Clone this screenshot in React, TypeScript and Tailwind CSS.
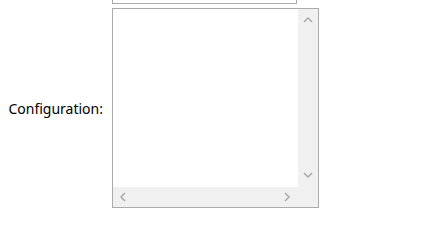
const Chevron = ({ dir }: { dir: "up" | "down" | "left" | "right" }) => {
  const paths: Record<string, string> = {
    up: "M1 6 L5 2 L9 6",
    down: "M1 2 L5 6 L9 2",
    left: "M6 1 L2 5 L6 9",
    right: "M2 1 L6 5 L2 9",
  };
  const vertical = dir === "up" || dir === "down";
  return (
    <svg
      width={vertical ? 10 : 8}
      height={vertical ? 8 : 10}
      viewBox={vertical ? "0 0 10 8" : "0 0 8 10"}
      fill="none"
      stroke="#a6a6a6"
      strokeWidth="1.4"
    >
      <path d={paths[dir]} />
    </svg>
  );
};

const App = () => {
  return (
    <div
      className="w-[421px] h-[239px] bg-white overflow-hidden text-[14px] text-black"
      style={{ fontFamily: '"Segoe UI", "Noto Sans", "Open Sans", sans-serif' }}
    >
      <div className="grid grid-cols-[112px_auto] gap-y-[4px]">
        {/* 上の入力欄 (見切れ) */}
        <div />
        <div className="-mt-[20px] w-[185px] h-[24px] border border-[#ababab] bg-white" />

        {/* 設定テキストエリア */}
        <div className="flex items-center justify-end pr-[9px]">Configuration:</div>
        <div className="w-[207px] h-[200px] border border-[#ababab] flex flex-col bg-white">
          <div className="flex flex-1">
            <div className="flex-1 bg-white" />
            <div className="w-[20px] bg-[#f0f0f0] flex flex-col items-center justify-between pt-[7px] pb-[8px]">
              <Chevron dir="up" />
              <Chevron dir="down" />
            </div>
          </div>
          <div className="flex h-[20px]">
            <div className="flex-1 bg-[#f0f0f0] flex items-center justify-between pl-[6px] pr-[7px]">
              <Chevron dir="left" />
              <Chevron dir="right" />
            </div>
            <div className="w-[20px] bg-[#f0f0f0]" />
          </div>
        </div>
      </div>
    </div>
  );
};

export default App;
